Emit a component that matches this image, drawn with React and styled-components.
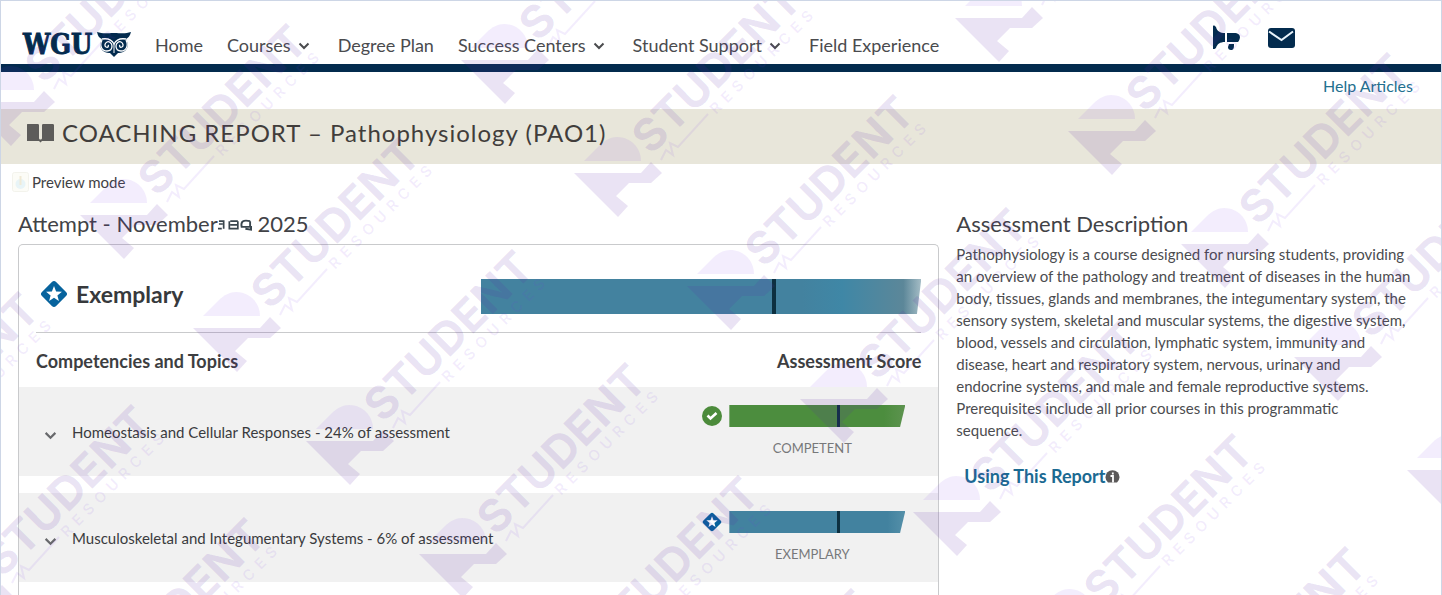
import React from "react";
import styled, { createGlobalStyle } from "styled-components";

const GlobalStyle = createGlobalStyle`
  * {
    box-sizing: border-box;
  }

  body {
    margin: 0;
    background: #ffffff;
    color: #3f4144;
    font-family: Lato, "Liberation Sans", sans-serif;
    font-size: 15px;
  }
`;

// --- Page ---
const Page = styled.div`
  position: relative;
  display: flex;
  flex-direction: column;
  min-height: 100vh;
  border: 1px solid #cdd6e6;
  border-bottom: 0;
`;

// --- Header ---
const Header = styled.header`
  display: flex;
  align-items: center;
  justify-content: space-between;
  height: 71px;
  padding: 24px 146px 0 22px;
  border-bottom: 8px solid #032b4e;
`;

const Nav = styled.nav`
  display: flex;
  align-items: center;
  gap: 24px;
`;

const Brand = styled.a`
  display: flex;
  color: #032b4e;
`;

const NavLink = styled.a`
  color: #4a4b4e;
  font-size: 18px;
  line-height: 24px;
  text-decoration: none;
  white-space: nowrap;
`;

const NavButton = styled.button`
  display: flex;
  align-items: center;
  gap: 7px;
  padding: 0 4px 0 0;
  border: 0;
  background: none;
  color: #4a4b4e;
  font-family: inherit;
  font-size: 18px;
  line-height: 24px;
  white-space: nowrap;
  cursor: pointer;
`;

const HeaderActions = styled.div`
  display: flex;
  align-items: center;
  gap: 28px;
  padding-bottom: 14px;
`;

const IconButton = styled.button`
  display: flex;
  padding: 0;
  border: 0;
  background: none;
  color: #032b4e;
  cursor: pointer;
`;

// --- Title area ---
const HelpBar = styled.div`
  display: flex;
  justify-content: flex-end;
  padding: 3px 28px 12px;
`;

const HelpLink = styled.a`
  color: #23708f;
  font-size: 16px;
  line-height: 22px;
  text-decoration: none;
`;

const Banner = styled.div`
  display: flex;
  align-items: center;
  gap: 8px;
  height: 55px;
  padding: 0 26px 8px;
  background: #e8e6da;
`;

const BannerTitle = styled.h1`
  margin: 0;
  color: #413d3b;
  font-size: 24px;
  font-weight: 400;
  letter-spacing: 1px;
  line-height: 30px;
`;

const Preview = styled.div`
  display: flex;
  align-items: center;
  gap: 3px;
  padding: 7px 11px 0;
  line-height: 22px;
`;

// --- Columns ---
const Columns = styled.main`
  flex: 1;
  display: grid;
  grid-template-columns: minmax(0, 2fr) minmax(0, 1fr);
  gap: 17px;
  padding: 16px 24px 0 17px;
`;

const Report = styled.section`
  display: flex;
  flex-direction: column;
`;

const Heading = styled.h2`
  display: flex;
  align-items: center;
  margin: 0;
  color: #414246;
  font-size: 22px;
  font-weight: 400;
  line-height: 30px;
  white-space: pre;
`;

const Card = styled.div`
  flex: 1;
  margin-top: 5px;
  border: 1px solid #c9cacc;
  border-bottom: 0;
  border-radius: 5px 5px 0 0;
`;

const Summary = styled.div`
  display: flex;
  align-items: center;
  justify-content: space-between;
  height: 88px;
  margin: 0 17px;
  padding: 16px 0 0 4px;
  border-bottom: 1px solid #c9cacc;
`;

const SummaryTop = styled.div`
  display: flex;
  align-items: center;
  gap: 8px;
  padding-bottom: 6px;
`;

const Level = styled.strong`
  color: #37393c;
  font-size: 23px;
  font-weight: 700;
  line-height: 28px;
`;

const Score = styled.div`
  position: relative;
  width: ${({ $wide }) => ($wide ? "50%" : "176px")};
  height: ${({ $wide }) => ($wide ? "35px" : "22px")};
  background: ${({ $fill }) => $fill};
  clip-path: ${({ $wide }) =>
    $wide
      ? "polygon(0 0, 100% 0, 99% 100%, 0 100%)"
      : "polygon(0 0, 100% 0, 97% 100%, 0 100%)"};
`;

/* passing mark inside a score bar */
const Cut = styled.span`
  position: absolute;
  top: 0;
  bottom: 0;
  left: ${({ $at }) => $at};
  width: ${({ $wide }) => ($wide ? "4px" : "3px")};
  background: #0d3040;
`;

const ListHead = styled.div`
  display: flex;
  justify-content: space-between;
  padding: 16px 17px 14px;
  color: #3d3e41;
  font-size: 18px;
  font-weight: 700;
  line-height: 24px;
`;

const Topic = styled.div`
  display: flex;
  align-items: center;
  justify-content: space-between;
  height: 89px;
  margin-bottom: 17px;
  padding: 0 33px 0 25px;
  background: #f1f1f1;
`;

const TopicButton = styled.button`
  display: flex;
  align-items: center;
  gap: 15px;
  padding: 0;
  border: 0;
  background: none;
  color: #3a3b3e;
  font-family: inherit;
  font-size: 15px;
  line-height: 22px;
  cursor: pointer;

  svg {
    margin-top: 5px;
    color: #68696c;
  }
`;

const Result = styled.div`
  display: grid;
  grid-template-columns: auto auto;
  column-gap: 7px;
  row-gap: 11px;
  align-items: center;
`;

const ResultLabel = styled.span`
  grid-column: 2;
  padding-right: 10px;
  color: #77787a;
  font-size: 13px;
  line-height: 20px;
  text-align: center;
`;

// --- Side column ---
const Description = styled.p`
  margin: 4px 0 23px;
  padding-right: 4px;
  color: #4b4c4f;
  font-size: 15px;
  line-height: 22px;
`;

const UsingReport = styled.a`
  display: inline-flex;
  align-items: center;
  padding-left: 8px;
  color: #1b6a92;
  font-size: 18px;
  font-weight: 700;
  line-height: 24px;
  text-decoration: none;
`;

// --- Overlay ---
const Overlay = styled.svg`
  position: absolute;
  inset: 0;
  width: 100%;
  height: 100%;
  overflow: hidden;
  pointer-events: none;
`;

const MarkName = styled.text`
  fill: rgba(94, 40, 170, 0.13);
  font-family: Inter, sans-serif;
  font-size: 45px;
  font-weight: 700;
`;

const MarkSub = styled.text`
  fill: rgba(120, 60, 230, 0.09);
  font-family: Inter, sans-serif;
  font-size: 15px;
  font-weight: 600;
  letter-spacing: 6px;
`;

// --- Icons ---
const Chevron = ({ size = 12 }) => (
  <svg width={size} height={size} viewBox="0 0 12 12" fill="none" aria-hidden="true">
    <path d="M1.500 4.500 6 9l4.500-4.500" stroke="currentColor" strokeWidth="2" />
  </svg>
);

const Logo = () => (
  <svg width="108" height="28" viewBox="0 0 108 28" role="img" aria-label="WGU" overflow="visible">
    <text
      x="0"
      y="23"
      fill="currentColor"
      stroke="currentColor"
      strokeWidth="0.9"
      fontFamily="'DejaVu Serif Condensed', 'DejaVu Serif', serif"
      fontSize="27"
      fontWeight="700"
    >
      WGU
    </text>
    <path
      d="M74 1c6 2 10 1 17 1s11 1 17-1c-1 4-3 6-5 7l2 5c0 5-4 9-9 9h-1l-4 4-4-4h-1c-5 0-9-4-9-9l2-5c-3-1-4-3-5-7z"
      fill="currentColor"
    />
    <g fill="none" stroke="#fff" strokeWidth="1.300">
      <path d="M79 9c-3 6 0 11 5 11 3 0 5-2 5-5s-3-5-5-4-3 4-1 5 3-1 2-2" />
      <path d="M103 9c3 6 0 11-5 11-3 0-5-2-5-5s3-5 5-4 3 4 1 5-3-1-2-2" />
      <path d="M79 8c6-1 10 1 12 5 2-4 6-6 12-5" />
      <path d="M91 13v9" strokeWidth="1" />
    </g>
  </svg>
);

const Megaphone = () => (
  <svg width="27" height="26" viewBox="0 0 27 26" fill="currentColor" aria-hidden="true">
    <path d="M0 1c1-1 2 0 3 1 1 4 4 6 9 6v9c-5 0-8 2-9 6-1 1-2 1-3 1z" />
    <path d="M14 8h7c7 0 7 5 4 9H14z" />
    <path d="M16 19h5v1c0 4-1 5-3 5s-3-1-3-3z" />
  </svg>
);

const Envelope = () => (
  <svg width="27" height="20" viewBox="0 0 27 20" aria-hidden="true">
    <rect width="27" height="20" rx="3" fill="currentColor" />
    <path d="M1 3.500 13.500 12 25 3.500" fill="none" stroke="#e9f3fb" strokeWidth="2" />
  </svg>
);

const Book = () => (
  <svg width="27" height="20" viewBox="0 0 27 20" fill="#5d5c5a" aria-hidden="true">
    <path d="M1 1h10c1 0 1 1 1 2v12c0 2 3 2 3 0V3c0-1 0-2 1-2h9c1 0 2 0 2 1v16H15l-1.500 1.500L12 18H0V2c0-1 0-1 1-1z" />
  </svg>
);

const PreviewIcon = () => (
  <svg width="17" height="20" viewBox="0 0 17 20" fill="none" aria-hidden="true">
    <rect x=".5" y=".5" width="16" height="19" rx="2" fill="#fcfcf7" stroke="#f3f3ec" />
    <circle cx="8.500" cy="12" r="5" fill="#e8f4f7" />
    <path d="M8.500 4v9" stroke="#f0ead6" strokeWidth="2" />
  </svg>
);

const Star = ({ size }) => (
  <svg width={size} height={size} viewBox="0 0 28 28" aria-hidden="true">
    <rect x="4" y="4" width="20" height="20" rx="3" fill="#07639d" transform="rotate(45 14 14)" />
    <path
      d="m14 6 2.100 5.400 5.800.3-4.500 3.700 1.500 5.600-4.900-3.200L9.100 21l1.500-5.600-4.500-3.700 5.800-.3z"
      fill="#fff"
    />
  </svg>
);

const Check = () => (
  <svg width="20" height="20" viewBox="0 0 20 20" aria-hidden="true">
    <circle cx="10" cy="10" r="10" fill="#4c8b3b" />
    <path d="m5.500 9.500 3 3 6-5.500" fill="none" stroke="#fff" strokeWidth="2.600" />
  </svg>
);

const Info = () => (
  <svg width="15" height="13" viewBox="0 0 15 13" aria-hidden="true">
    <path d="M3 12.500a7 7 0 1 1 9 0z" fill="#5b5959" />
    <path d="M5.500 6H8v6.500M7.800 2.500v2" fill="none" stroke="#fff" strokeWidth="1.800" />
  </svg>
);

/* day of the attempt, smudged out */
const HiddenDay = () => (
  <svg width="34" height="16" viewBox="1 0 36 14" fill="none" stroke="#3a464e" aria-hidden="true">
    <path d="M2 4h5v8M2 7h4M1 12h4" strokeWidth="1.800" />
    <path d="M13 4v8h9V4M14 4h8M14 8h8" strokeWidth="1.800" />
    <path d="M35 4c-8-2-10 1-9 6h9V4M30 12l6 1V9" strokeWidth="2" />
  </svg>
);

const fills = {
  overall:
    "linear-gradient(90deg, #43829f 0 73%, #3f87a6 82%, #5c8799 96%, #a4bcc5 100%)",
  exemplary: "linear-gradient(90deg, #42829f 0 90%, #5590a9 100%)",
  competent: "linear-gradient(90deg, #4c8d3e 0 88%, #5d934f 100%)",
};

const navItems = [
  { label: "Home" },
  { label: "Courses", menu: true },
  { label: "Degree Plan" },
  { label: "Success Centers", menu: true },
  { label: "Student Support", menu: true },
  { label: "Field Experience" },
];

const topics = [
  {
    name: "Homeostasis and Cellular Responses - 24% of assessment",
    level: "COMPETENT",
    fill: fills.competent,
    icon: <Check />,
  },
  {
    name: "Musculoskeletal and Integumentary Systems - 6% of assessment",
    level: "EXEMPLARY",
    fill: fills.exemplary,
    icon: <Star size={20} />,
  },
];

// left tip of each logo in the diagonal grid
const marks = [];
for (let col = -2; col < 6; col += 1) {
  for (let row = -6; row < 12; row += 1) {
    const x = 192 + col * 381 + row * 113;
    const y = 327 - col * 155 + row * 113;
    if (x > -230 && x < 1450 && y > -50 && y < 800) marks.push({ x, y });
  }
}

const Watermark = () => (
  <Overlay aria-hidden="true">
    {marks.map(({ x, y }) => (
      <g key={`${x}-${y}`} transform={`translate(${x} ${y})`}>
        <path
          d="M0 0h67l10-11L88 0 77 10H55L42 23l12 10-10 11z"
          fill="rgba(94, 40, 170, 0.13)"
        />
        <path
          d="M10-12 26-28C31-33 37-36 43-36c14 0 24 11 24 24z"
          fill="rgba(120, 60, 230, 0.09)"
        />
        <path
          d="m87-13 5-10 7 5-3-12 8 4 30-33"
          fill="none"
          stroke="rgba(120, 60, 230, 0.09)"
          strokeWidth="2"
        />
        <MarkName transform="translate(77 -17) rotate(-45)">STUDENT</MarkName>
        <MarkSub transform="translate(142 -58) rotate(-45)">RESOURCES</MarkSub>
      </g>
    ))}
  </Overlay>
);

const App = () => {
  return (
    <>
      <GlobalStyle />
      <Page>
        <Header>
          <Nav aria-label="Main">
            <Brand href="#home">
              <Logo />
            </Brand>
            {navItems.map(({ label, menu }) =>
              menu ? (
                <NavButton key={label} type="button" aria-haspopup="true">
                  {label}
                  <Chevron />
                </NavButton>
              ) : (
                <NavLink key={label} href="#page">
                  {label}
                </NavLink>
              )
            )}
          </Nav>
          <HeaderActions>
            <IconButton type="button" aria-label="Announcements">
              <Megaphone />
            </IconButton>
            <IconButton type="button" aria-label="Messages">
              <Envelope />
            </IconButton>
          </HeaderActions>
        </Header>

        <HelpBar>
          <HelpLink href="#help">Help Articles</HelpLink>
        </HelpBar>

        <Banner>
          <Book />
          <BannerTitle>COACHING REPORT – Pathophysiology (PAO1)</BannerTitle>
        </Banner>

        <Preview>
          <PreviewIcon />
          Preview mode
        </Preview>

        <Columns>
          <Report>
            <Heading>
              Attempt - November
              <HiddenDay />
              {" 2025"}
            </Heading>
            <Card>
              <Summary>
                <SummaryTop>
                  <Star size={28} />
                  <Level>Exemplary</Level>
                </SummaryTop>
                <Score $wide $fill={fills.overall}>
                  <Cut $wide $at="66%" />
                </Score>
              </Summary>
              <ListHead>
                <span>Competencies and Topics</span>
                <span>Assessment Score</span>
              </ListHead>
              {topics.map(({ name, level, fill, icon }) => (
                <Topic key={name}>
                  <TopicButton type="button" aria-expanded="false">
                    <Chevron size={13} />
                    {name}
                  </TopicButton>
                  <Result>
                    {icon}
                    <Score $fill={fill}>
                      <Cut $at="61%" />
                    </Score>
                    <ResultLabel>{level}</ResultLabel>
                  </Result>
                </Topic>
              ))}
            </Card>
          </Report>

          <aside>
            <Heading>Assessment Description</Heading>
            <Description>
              Pathophysiology is a course designed for nursing students,
              providing an overview of the pathology and treatment of diseases
              in the human body, tissues, glands and membranes, the
              integumentary system, the sensory system, skeletal and muscular
              systems, the digestive system, blood, vessels and circulation,
              lymphatic system, immunity and disease, heart and respiratory
              system, nervous, urinary and endocrine&nbsp;systems, and male and
              female reproductive systems. Prerequisites include all prior
              courses in this programmatic
              <br />
              sequence.
            </Description>
            <UsingReport href="#using">
              Using This Report
              <Info />
            </UsingReport>
          </aside>
        </Columns>

        <Watermark />
      </Page>
    </>
  );
};

export default App;
